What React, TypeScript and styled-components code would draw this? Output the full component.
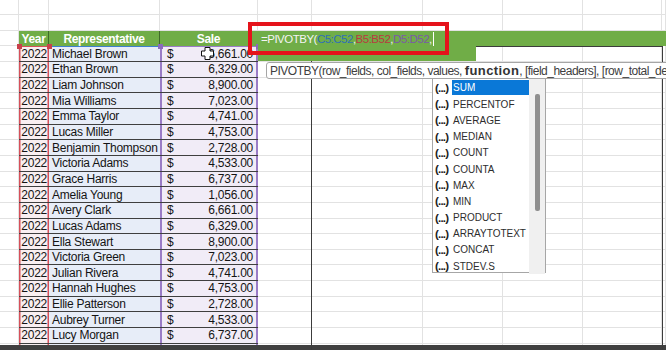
import React from 'react';
import styled, { createGlobalStyle, css } from 'styled-components';

const GlobalStyle = createGlobalStyle`
  html, body {
    margin: 0;
    padding: 0;
    background: #ffffff;
  }
  body {
    font-family: "Liberation Sans", Arial, sans-serif;
  }
`;

const Page = styled.div`
  position: relative;
  width: 666px;
  height: 350px;
  overflow: hidden;
  display: flex;
  flex-direction: column;
`;

const Sheet = styled.div`
  flex: 1;
  min-height: 0;
  overflow: hidden;
  display: grid;
  grid-template-columns: 19px 30px 111px 98px 54px 111px 80px 80px 79px 1fr;
  grid-template-rows: 15px 16px 15.3px repeat(20, 15.67px);
  font-size: 12px;
  color: #141414;
  letter-spacing: -0.25px;
`;

const StatusBar = styled.div`
  height: 5px;
  background: #404040;
`;

const Blank = styled.div`
  box-sizing: border-box;
  border-right: 1px solid #e2e2e2;
  border-bottom: 1px solid #e2e2e2;
`;

const HeadCell = styled.div<{ $divider?: boolean }>`
  box-sizing: border-box;
  background: #70ad47;
  color: #ffffff;
  font-weight: bold;
  display: flex;
  align-items: center;
  justify-content: center;
  border-right: 1px solid ${p => (p.$divider ? '#3f6a2a' : 'transparent')};
  letter-spacing: -0.35px;
`;

const DataCell = styled.div<{ $fill: string; $top?: string }>`
  box-sizing: border-box;
  background: ${p => p.$fill};
  border-bottom: 1px solid #3f3f3f;
  ${p =>
    p.$top &&
    css`
      border-top: 1.5px solid ${p.$top};
    `}
  display: flex;
  align-items: center;
  white-space: nowrap;
  overflow: hidden;
  line-height: 1;
`;

const YearCell = styled(DataCell)`
  justify-content: flex-end;
  padding-right: 2px;
  box-shadow: inset 1.5px 0 0 #d6505a, inset -1.5px 0 0 #d6505a;
`;

const NameCell = styled(DataCell)`
  padding-left: 3px;
`;

const SaleCell = styled(DataCell)`
  justify-content: space-between;
  padding: 0 5px 0 7px;
  box-shadow: inset 2px 0 0 #9a7cc6, inset -2px 0 0 #9a7cc6;
`;

const SpillOutline = styled.div`
  position: absolute;
  left: 311px;
  top: 46px;
  width: 352px;
  height: 320px;
  box-sizing: border-box;
  border: 1.5px solid #3c3c3c;
`;

const EditBox = styled.div`
  position: absolute;
  left: 258px;
  top: 31px;
  width: 218px;
  height: 30px;
  background: #70ad47;
  color: #f4f4f4;
  font-size: 11.5px;
  line-height: 16px;
  padding-left: 3px;
  box-sizing: border-box;
  white-space: nowrap;
  letter-spacing: -0.5px;
`;

const Ref = styled.span<{ $color: string }>`
  color: ${p => p.$color};
`;

const Caret = styled.span`
  display: inline-block;
  width: 1px;
  height: 14px;
  margin-left: 1px;
  vertical-align: -3px;
  background: #ffffff;
`;

const RedFrame = styled.div`
  position: absolute;
  left: 248px;
  top: 22px;
  width: 201px;
  height: 33px;
  box-sizing: border-box;
  border: 4px solid #e5131b;
`;

const Tooltip = styled.div`
  position: absolute;
  left: 266px;
  top: 62px;
  width: 430px;
  height: 17px;
  box-sizing: border-box;
  border: 1px solid #a6a6a6;
  border-radius: 3px;
  background: #ffffff;
  color: #404040;
  font-size: 12px;
  line-height: 15px;
  padding-left: 3px;
  white-space: nowrap;
  overflow: hidden;
  letter-spacing: -0.5px;
`;

const CurrentArg = styled.b`
  font-size: 13px;
  letter-spacing: 0.4px;
  color: #333;
`;

const Dropdown = styled.div`
  position: absolute;
  left: 432px;
  top: 78px;
  width: 114px;
  height: 195px;
  box-sizing: border-box;
  border: 1px solid #a6a6a6;
  background: #ffffff;
  display: grid;
  grid-template-columns: 1fr 16px;
`;

const List = styled.div`
  display: flex;
  flex-direction: column;
  padding-top: 1px;
`;

const Item = styled.div`
  height: 16.2px;
  display: flex;
  align-items: center;
  color: #2d2d2d;
  font-size: 10px;
`;

const FnIcon = styled.span`
  width: 19px;
  padding-left: 2px;
  box-sizing: border-box;
  font-size: 11.5px;
  font-weight: bold;
  letter-spacing: -0.8px;
  color: #222;
`;

const FnName = styled.span<{ $active?: boolean }>`
  flex: 1;
  align-self: stretch;
  display: flex;
  align-items: center;
  padding-left: 1px;
  ${p =>
    p.$active &&
    css`
      background: #0a78d7;
      color: #ffffff;
      margin-bottom: 1px;
    `}
`;

const Scrollbar = styled.div`
  background: #f0f0f0;
  display: flex;
  justify-content: center;
  padding-top: 15px;
`;

const Thumb = styled.div`
  width: 5px;
  height: 117px;
  border-radius: 2px;
  background: #8f8f8f;
`;

const Handle = styled.div<{ $x: number; $color: string }>`
  position: absolute;
  top: 44px;
  left: ${p => p.$x - 2}px;
  width: 5px;
  height: 5px;
  background: ${p => p.$color};
`;

const Pointer = styled.svg`
  position: absolute;
  left: 201px;
  top: 47px;
`;

type Row = [string, string];

const rows: Row[] = [
  ['Michael Brown', '6,661.00'],
  ['Ethan Brown', '6,329.00'],
  ['Liam Johnson', '8,900.00'],
  ['Mia Williams', '7,023.00'],
  ['Emma Taylor', '4,741.00'],
  ['Lucas Miller', '4,753.00'],
  ['Benjamin Thompson', '2,728.00'],
  ['Victoria Adams', '4,533.00'],
  ['Grace Harris', '6,737.00'],
  ['Amelia Young', '1,056.00'],
  ['Avery Clark', '6,661.00'],
  ['Lucas Adams', '6,329.00'],
  ['Ella Stewart', '8,900.00'],
  ['Victoria Green', '7,023.00'],
  ['Julian Rivera', '4,741.00'],
  ['Hannah Hughes', '4,753.00'],
  ['Ellie Patterson', '2,728.00'],
  ['Aubrey Turner', '4,533.00'],
  ['Lucy Morgan', '6,737.00'],
  ['Madelyn Hayes', '1,056.00'],
];

const functions = [
  'SUM',
  'PERCENTOF',
  'AVERAGE',
  'MEDIAN',
  'COUNT',
  'COUNTA',
  'MAX',
  'MIN',
  'PRODUCT',
  'ARRAYTOTEXT',
  'CONCAT',
  'STDEV.S',
];

const EXTRA_COLS = 6;

const blanks = (key: string, n: number) =>
  Array.from({ length: n }, (_, i) => <Blank key={`${key}-${i}`} />);

const App = (): JSX.Element => (
  <Page>
    <GlobalStyle />
    <Sheet>
      {blanks('r0', 10)}
      {blanks('r1', 10)}

      <Blank />
      <HeadCell $divider>Year</HeadCell>
      <HeadCell $divider>Representative</HeadCell>
      <HeadCell>Sale</HeadCell>
      {Array.from({ length: EXTRA_COLS }, (_, i) => (
        <HeadCell key={`h-${i}`} />
      ))}

      {rows.map(([name, sale], i) => (
        <React.Fragment key={name + i}>
          <Blank />
          <YearCell $fill="#f9eff1" $top={i === 0 ? '#d6505a' : undefined}>
            2022
          </YearCell>
          <NameCell $fill="#e7edf8" $top={i === 0 ? '#3f7fd0' : undefined}>
            {name}
          </NameCell>
          <SaleCell $fill="#f1ecf7" $top={i === 0 ? '#9a7cc6' : undefined}>
            <span>$</span>
            <span>{sale}</span>
          </SaleCell>
          {blanks(`d${i}`, EXTRA_COLS)}
        </React.Fragment>
      ))}
    </Sheet>
    <StatusBar />

    <Handle $x={19} $color="#c9404b" />
    <Handle $x={49} $color="#c9404b" />
    <Handle $x={160} $color="#8b6bbd" />
    <Handle $x={258} $color="#8b6bbd" />

    <Pointer width="13" height="13" viewBox="0 0 13 13">
      <polygon
        points="4,0.5 9,0.5 9,4 12.5,4 12.5,9 9,9 9,12.5 4,12.5 4,9 0.5,9 0.5,4 4,4"
        fill="#ffffff"
        stroke="#111111"
        strokeWidth="1"
      />
    </Pointer>

    <SpillOutline />
    <EditBox>
      =PIVOTBY(
      <Ref $color="#2f6fb8">C5:C52</Ref>,<Ref $color="#b83a3f">B5:B52</Ref>,
      <Ref $color="#7a5aa8">D5:D52</Ref>,
      <Caret />
    </EditBox>
    <RedFrame />

    <Tooltip>
      PIVOTBY(row_fields, col_fields, values, <CurrentArg>function</CurrentArg>,
      [field_headers], [row_total_depth], [row_sort_order]
    </Tooltip>

    <Dropdown>
      <List>
        {functions.map((fn, i) => (
          <Item key={fn}>
            <FnIcon>(...)</FnIcon>
            <FnName $active={i === 0}>{fn}</FnName>
          </Item>
        ))}
      </List>
      <Scrollbar>
        <Thumb />
      </Scrollbar>
    </Dropdown>
  </Page>
);

export default App;
